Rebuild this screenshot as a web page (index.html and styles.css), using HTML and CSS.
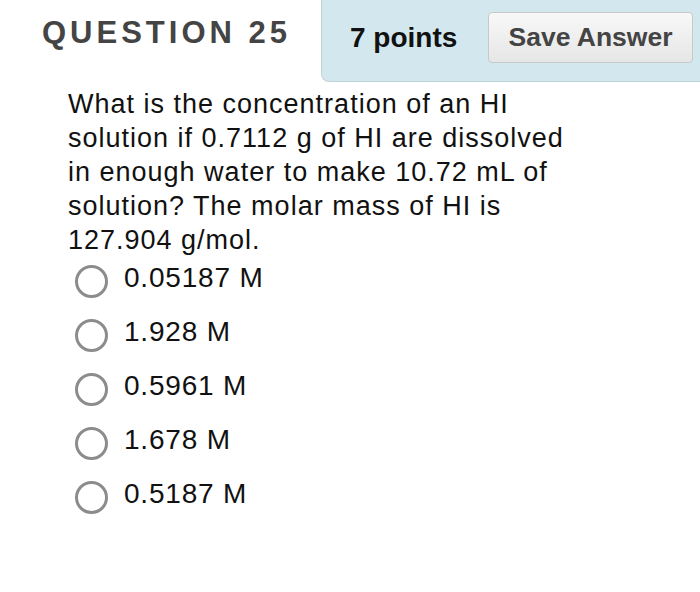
FILE: index.html
```html
<!DOCTYPE html>
<html>
<head>
<meta charset="utf-8">
<link rel="stylesheet" href="styles.css">
</head>
<body>
<div class="header">
  <div class="title">QUESTION 25</div>
  <div class="panel">
    <span class="points">7 points</span>
    <button class="save">Save Answer</button>
  </div>
</div>
<div class="question">What is the concentration of an HI solution if 0.7112 g of HI are dissolved in enough water to make 10.72 mL of solution? The molar mass of HI is 127.904 g/mol.</div>
<ul class="options">
  <li class="option"><span class="radio"></span><span class="label">0.05187 M</span></li>
  <li class="option"><span class="radio"></span><span class="label">1.928 M</span></li>
  <li class="option"><span class="radio"></span><span class="label">0.5961 M</span></li>
  <li class="option"><span class="radio"></span><span class="label">1.678 M</span></li>
  <li class="option"><span class="radio"></span><span class="label">0.5187 M</span></li>
</ul>
</body>
</html>
```
FILE: styles.css
```css
html, body {
  margin: 0;
  padding: 0;
  background: #ffffff;
  font-family: "Liberation Sans", Arial, sans-serif;
}
.header {
  display: flex;
  height: 82px;
}
.title {
  padding: 17px 0 0 42px;
  font-size: 31px;
  line-height: 31px;
  font-weight: bold;
  letter-spacing: 4px;
  color: #444444;
}
.panel {
  margin-left: auto;
  width: 379px;
  box-sizing: border-box;
  height: 82px;
  background: #d3e8ee;
  border-left: 1px solid #bfd4da;
  border-bottom: 1px solid #bfd4da;
  border-bottom-left-radius: 8px;
  display: flex;
  align-items: center;
  align-self: flex-start;
  padding: 12px 7px 18px 28px;
}
.points {
  font-size: 28px;
  line-height: 28px;
  font-weight: bold;
  color: #111111;
}
.save {
  margin-left: auto;
  width: 205px;
  height: 51px;
  box-sizing: border-box;
  border: 1px solid #c8c8c8;
  border-radius: 4px;
  background: linear-gradient(#f8f8f8, #e6e6e6);
  font-family: "Liberation Sans", Arial, sans-serif;
  font-size: 26.5px;
  font-weight: bold;
  color: #444444;
  padding: 0;
}
.question {
  margin: 5px 0 0 68px;
  width: 510px;
  font-size: 27px;
  line-height: 34px;
  letter-spacing: 1px;
  color: #111111;
}
.options {
  list-style: none;
  margin: -3px 0 0 0;
  padding: 0 0 0 75px;
}
.option {
  display: flex;
  align-items: center;
  height: 54px;
}
.radio {
  width: 33px;
  height: 33px;
  box-sizing: border-box;
  border: 3px solid #8c8c8c;
  border-radius: 50%;
  flex: 0 0 auto;
}
.label {
  margin-left: 16px;
  font-size: 28px;
  line-height: 34px;
  letter-spacing: 0.8px;
  padding-bottom: 6px;
  color: #111111;
}
```
